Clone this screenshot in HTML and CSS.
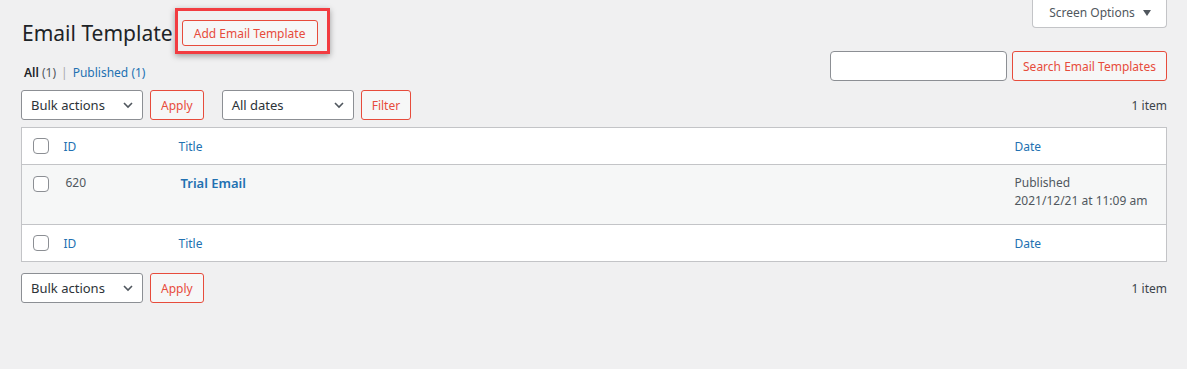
FILE: index.html
```html
<!DOCTYPE html>
<html>
<head>
<meta charset="utf-8">
<link rel="stylesheet" href="styles.css">
</head>
<body>
<div class="screen-meta">
  <button class="screen-tab">Screen Options <svg class="tri" viewBox="0 0 8 6" width="8" height="6"><path d="M0 0h8L4 6z" fill="#50575e"/></svg></button>
</div>
<div class="wrap">
  <div class="title-row">
    <h1 class="page-title">Email Template</h1>
    <span class="highlight"><a class="btn btn-red title-action">Add Email Template</a></span>
  </div>
  <div class="filter-row">
    <ul class="subsubsub">
      <li class="current">All <span class="count">(1)</span></li>
      <li class="sep">|</li>
      <li><a class="link">Published <span class="count-link">(1)</span></a></li>
    </ul>
    <div class="search-box">
      <input class="search-input" type="text">
      <button class="btn btn-red search-btn">Search Email Templates</button>
    </div>
  </div>
  <div class="tablenav top">
    <div class="actions">
      <div class="select bulk">Bulk actions <svg class="chev" viewBox="0 0 16 16" width="16" height="16"><path d="M4 6l4 4 4-4" fill="none" stroke="#50575e" stroke-width="1.6"/></svg></div>
      <button class="btn btn-red">Apply</button>
    </div>
    <div class="actions">
      <div class="select dates">All dates <svg class="chev" viewBox="0 0 16 16" width="16" height="16"><path d="M4 6l4 4 4-4" fill="none" stroke="#50575e" stroke-width="1.6"/></svg></div>
      <button class="btn btn-red">Filter</button>
    </div>
    <div class="items">1 item</div>
  </div>
  <table class="list">
    <colgroup>
      <col class="c-cb"><col class="c-id"><col class="c-title"><col class="c-date">
    </colgroup>
    <thead>
      <tr><td class="cb"><span class="checkbox"></span></td><th class="hd">ID</th><th class="hd">Title</th><th class="hd">Date</th></tr>
    </thead>
    <tbody>
      <tr class="row"><td class="cb"><span class="checkbox"></span></td><td class="id">620</td><td class="title"><a class="row-title">Trial Email</a></td><td class="date">Published<br>2021/12/21 at 11:09 am</td></tr>
    </tbody>
    <tfoot>
      <tr><td class="cb"><span class="checkbox"></span></td><th class="hd">ID</th><th class="hd">Title</th><th class="hd">Date</th></tr>
    </tfoot>
  </table>
  <div class="tablenav bottom">
    <div class="actions">
      <div class="select bulk">Bulk actions <svg class="chev" viewBox="0 0 16 16" width="16" height="16"><path d="M4 6l4 4 4-4" fill="none" stroke="#50575e" stroke-width="1.6"/></svg></div>
      <button class="btn btn-red">Apply</button>
    </div>
    <div class="items">1 item</div>
  </div>
</div>
</body>
</html>
```
FILE: styles.css
```css
html, body {
  margin: 0;
  padding: 0;
}
body {
  background: #f0f0f1;
  font-family: "Noto Sans", "Open Sans", sans-serif;
  font-size: 12px;
  color: #3c434a;
}
.screen-meta {
  display: flex;
  justify-content: flex-end;
  padding-right: 20px;
  height: 0;
}
.screen-tab {
  width: 135px;
  height: 28px;
  background: #fff;
  border: 1px solid #c3c4c7;
  border-top: none;
  border-radius: 0 0 4px 4px;
  font-family: inherit;
  font-size: 12px;
  color: #50575e;
  padding: 0 0 2px 1px;
  display: flex;
  align-items: center;
  justify-content: center;
  gap: 8px;
}
.tri {
  display: block;
}
.wrap {
  margin: 0 20px 0 21px;
}
.title-row {
  display: flex;
  align-items: flex-start;
  padding-top: 8px;
}
.page-title {
  font-size: 21px;
  font-weight: 400;
  color: #1d2327;
  margin: 0;
  padding-top: 10px;
  line-height: 30px;
  padding-left: 1px;
}
.highlight {
  display: inline-flex;
  border: 3px solid #f23c41;
  padding: 9px 9px 5px 4px;
  margin-left: 2px;
  box-shadow: 0 2px 6px rgba(0, 0, 0, 0.35);
}
.btn {
  box-sizing: border-box;
  display: inline-flex;
  align-items: center;
  justify-content: center;
  height: 30px;
  padding: 0 10px;
  background: #f6f7f7;
  border: 1px solid #e74c3c;
  border-radius: 3px;
  color: #e74c3c;
  font-family: inherit;
  font-size: 12px;
}
.title-action {
  height: 26px;
  width: 136px;
  padding: 0;
  font-weight: 400;
}
.filter-row {
  display: flex;
  justify-content: space-between;
  align-items: flex-start;
  margin-top: -3px;
}
.subsubsub {
  list-style: none;
  margin: 13px 0 0 3px;
  padding: 0;
  display: flex;
  gap: 5px;
  color: #50575e;
  line-height: 18px;
}
.subsubsub .current {
  color: #1d2327;
  font-weight: 600;
}
.subsubsub .current .count {
  font-weight: 400;
  color: #50575e;
}
.sep {
  color: #a7aaad;
}
.link {
  color: #2271b1;
}
.search-box {
  display: flex;
  gap: 5px;
}
.search-input {
  box-sizing: border-box;
  width: 177px;
  height: 30px;
  border: 1px solid #8c8f94;
  border-radius: 4px;
  background: #fff;
  margin: 0;
}
.search-btn {
  width: 155px;
  padding: 0;
}
.tablenav {
  display: flex;
  align-items: center;
  height: 30px;
  margin: 8px 0 7px 0;
}
.tablenav.bottom {
  margin-top: 11px;
}
.actions {
  display: flex;
  gap: 7px;
  margin-right: 18px;
}
.actions .btn {
  padding: 0 10px;
}
.select {
  box-sizing: border-box;
  height: 30px;
  border: 1px solid #8c8f94;
  border-radius: 3px;
  background: #fff;
  color: #2c3338;
  display: flex;
  align-items: center;
  justify-content: space-between;
  padding: 0 6px 0 9px;
  font-size: 13px;
}
.select.bulk {
  width: 122px;
}
.select.dates {
  width: 132px;
}
.chev {
  display: block;
}
.items {
  margin-left: auto;
  color: #3c434a;
}
.list {
  width: 100%;
  border-collapse: collapse;
  table-layout: fixed;
  background: #fff;
  border: 1px solid #c3c4c7;
}
.c-cb { width: 34px; }
.c-id { width: 115px; }
.c-date { width: 160px; }
thead tr {
  border-bottom: 1px solid #c3c4c7;
}
tfoot tr {
  border-top: 1px solid #c3c4c7;
}
td, th {
  padding: 0 8px;
  text-align: left;
}
.cb {
  padding: 0 0 0 11px;
}
thead td, thead th, tfoot td, tfoot th {
  height: 36px;
  vertical-align: middle;
}
.hd {
  font-weight: 400;
  color: #2271b1;
  font-size: 12px;
}
.checkbox {
  display: block;
  box-sizing: border-box;
  width: 16px;
  height: 16px;
  border: 1px solid #8c8f94;
  border-radius: 4px;
  background: #fff;
}
.row {
  background: #f6f7f7;
}
.row td {
  height: 60px;
  vertical-align: top;
  padding-top: 9px;
  line-height: 18px;
  box-sizing: border-box;
}
.row .cb {
  padding-top: 11px;
}
.id {
  color: #50575e;
  padding-left: 10px;
}
.row-title {
  color: #2271b1;
  font-weight: 600;
  font-size: 13px;
  padding-left: 2px;
}
.date {
  color: #50575e;
}
```
